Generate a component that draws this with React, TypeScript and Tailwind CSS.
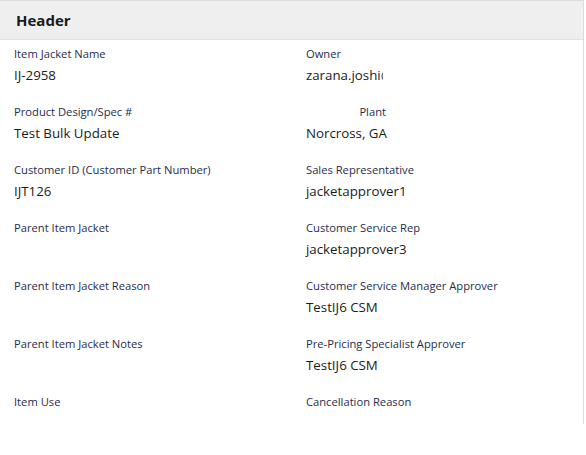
const left = [
  { label: 'Item Jacket Name', value: 'IJ-2958' },
  { label: 'Product Design/Spec #', value: 'Test Bulk Update' },
  { label: 'Customer ID (Customer Part Number)', value: 'IJT126' },
  { label: 'Parent Item Jacket', value: '' },
  { label: 'Parent Item Jacket Reason', value: '' },
  { label: 'Parent Item Jacket Notes', value: '' },
  { label: 'Item Use', value: '' },
];

const right = [
  { label: 'Sales Representative', value: 'jacketapprover1' },
  { label: 'Customer Service Rep', value: 'jacketapprover3' },
  { label: 'Customer Service Manager Approver', value: 'TestIJ6 CSM' },
  { label: 'Pre-Pricing Specialist Approver', value: 'TestIJ6 CSM' },
  { label: 'Cancellation Reason', value: '' },
];

function Field({ label, value }: { label: string; value: string }) {
  return (
    <div className="h-[58px] pt-[6px]">
      <div className="text-[11.2px] leading-[16px] text-[#1f2d4d]">{label}</div>
      {value && <div className="mt-[4px] text-[13.3px] leading-[18px] text-[#1b1b1b]">{value}</div>}
    </div>
  );
}

export default function App() {
  return (
    <div className="w-[586px] h-[455px] bg-white" style={{ fontFamily: '"Open Sans", "Noto Sans", sans-serif' }}>
      <div className="w-[584px] h-[424px] border-t border-r border-[#dcdcdc]">
        <div className="h-[39px] bg-[#efefef] border-b border-[#e2e2e2] flex items-center pl-[16px]">
          <h2 className="text-[15px] font-bold text-[#1a1a1a]">Header</h2>
        </div>
        <div className="grid grid-cols-[292px_1fr] pl-[14px]">
          <div>
            {left.map((f) => (
              <Field key={f.label} label={f.label} value={f.value} />
            ))}
          </div>
          <div>
            <div className="h-[58px] pt-[6px]">
              <div className="text-[11.2px] leading-[16px] text-[#1f2d4d]">Owner</div>
              <div className="mt-[4px] w-[77px] overflow-hidden whitespace-nowrap text-[13.3px] leading-[18px] text-[#1b1b1b]">
                zarana.joshi@example.com
              </div>
            </div>
            <div className="h-[58px] pt-[6px] w-[80px]">
              <div className="text-right text-[11.2px] leading-[16px] text-[#1f2d4d]">Plant</div>
              <div className="mt-[4px] whitespace-nowrap text-[13.3px] leading-[18px] text-[#1b1b1b]">Norcross, GA</div>
            </div>
            {right.map((f) => (
              <Field key={f.label} label={f.label} value={f.value} />
            ))}
          </div>
        </div>
      </div>
    </div>
  );
}
